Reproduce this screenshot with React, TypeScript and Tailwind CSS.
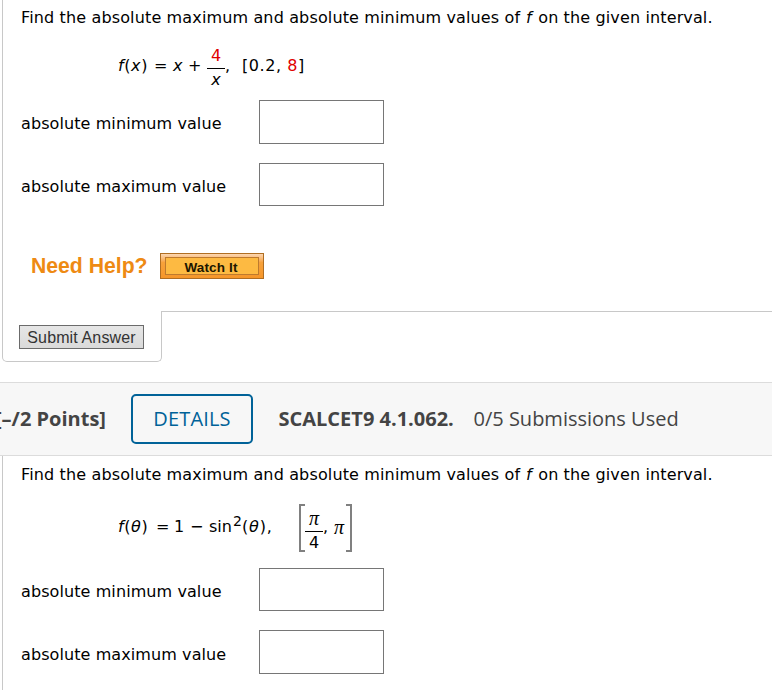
import type { ReactNode } from "react";

function Cell({ w, children, italic = false }: { w: number; children: ReactNode; italic?: boolean }) {
  return (
    <span className={italic ? "block shrink-0 italic" : "block shrink-0"} style={{ width: w }}>
      {children}
    </span>
  );
}

function Question() {
  return (
    <p className="flex h-5 whitespace-pre pl-[18px] leading-5">
      <Cell w={505}>
        <span className="tracking-[0.14px]">Find the absolute maximum and absolute minimum values of </span>
      </Cell>
      <Cell w={7} italic>f</Cell>
      <span className="tracking-[0.13px]"> on the given interval.</span>
    </p>
  );
}

function AnswerRow({ label, size, pad = "pt-1" }: { label: string; size: string; pad?: string }) {
  return (
    <label className="flex items-center pl-[18px]">
      <span className={`${pad} w-[238px] leading-5 tracking-[0.09px]`}>{label}</span>
      <input className={`${size} w-[125px] border border-[#767676] bg-white px-2 outline-none`} />
    </label>
  );
}

function Bracket({ right = false }: { right?: boolean }) {
  return (
    <span
      className={
        right
          ? "block h-12 w-1.5 border-y-2 border-r-2 border-[#808080]"
          : "block h-12 w-1.5 border-y-2 border-l-2 border-[#808080]"
      }
    />
  );
}

function Pi() {
  return <span className="font-['Liberation_Serif',serif] text-[20px] italic leading-5">π</span>;
}

export default function App() {
  return (
    <main className="h-[690px] w-[772px] overflow-hidden bg-white font-['DejaVu_Sans',sans-serif] text-[16px] text-black">
      <section className="ml-0.5 h-[311px] border-l border-[#c8c8c8] pt-2">
        <Question />
        <div className="mt-[19px] flex h-11 whitespace-pre pl-[115px] leading-5">
          <div className="flex pt-[9px]">
            <Cell w={36}><span className="tracking-[0.6px]"><i>f</i>(<i>x</i>)</span></Cell>
            <Cell w={19}>=</Cell>
            <Cell w={15} italic>x</Cell>
            <Cell w={19}>+</Cell>
          </div>
          <div className="w-[18px] text-center">
            <div className="h-[22px] border-b border-black leading-[18px] text-[#e00000]">4</div>
            <div className="pt-px italic">x</div>
          </div>
          <div className="flex pt-[9px]">
            <Cell w={17}>,</Cell>
            <span className="tracking-[0.55px]">[0.2, <span className="text-[#e00000]">8</span>]</span>
          </div>
        </div>
        <div className="mt-[9px] flex flex-col gap-[19px]">
          <AnswerRow label="absolute minimum value" size="h-11" />
          <AnswerRow label="absolute maximum value" size="h-[43px]" />
        </div>
        <div className="mt-[47px] flex h-[26px] items-center pl-7 font-['Liberation_Sans',Arial,sans-serif] font-bold">
          <span className="w-[129px] text-[21.2px] leading-6 text-[#ee8a13]">Need Help?</span>
          <button className="h-[26px] w-[104px] border border-[#b06e22] bg-linear-to-b from-[#fbd6b0] via-[#f7a23b] via-35% to-[#f69629] p-1 pt-[3px]">
            <span className="flex h-[18px] items-center justify-center border border-[#bd7a2e] bg-[#fdba42] pr-0.5 pt-[3px] text-[13.5px] leading-4 tracking-[0.15px] text-[#201600]">
              Watch It
            </span>
          </button>
        </div>
      </section>
      <div className="flex h-[71px]">
        <div className="ml-0.5 h-[51px] w-40 rounded-b-[5px] border-x border-b border-[#c8c8c8] pl-4 pt-3.5">
          <button className="h-6 w-[125px] border border-[#6b6b6b] bg-linear-to-b from-[#e6e6e6] to-[#dadada] pt-px font-['Liberation_Sans',Arial,sans-serif] text-[16px] leading-[22px] tracking-[0.13px] text-[#333]">
            Submit Answer
          </button>
        </div>
        <div className="flex-1 border-t border-[#c8c8c8]" />
      </div>
      <header className="flex h-[74px] items-center whitespace-pre border-y border-[#dcdcdc] bg-[#f7f7f7] font-['Open_Sans',sans-serif] text-[20px] text-[#444]">
        <div className="-ml-[5px] w-[136px] font-bold">[–/2 Points]</div>
        <button className="h-[50px] w-[122px] rounded-[5px] border-2 border-[#006298] bg-transparent text-[20px] tracking-[0.15px] text-[#006298]">
          DETAILS
        </button>
        <div className="ml-[25.5px] w-[195px] font-bold">SCALCET9 4.1.062.</div>
        <div>0/5 Submissions Used</div>
      </header>
      <section className="ml-0.5 h-[234px] border-l border-[#c8c8c8] pt-[9px]">
        <Question />
        <div className="mt-[19px] flex h-12 whitespace-pre pl-[115px] leading-5">
          <div className="flex pt-[13px]">
            <Cell w={38}><span className="tracking-[0.6px]"><i>f</i>(<i>θ</i>)</span></Cell>
            <Cell w={18}>=</Cell>
            <Cell w={16}>1</Cell>
            <Cell w={19}>−</Cell>
            <Cell w={24}>sin</Cell>
            <Cell w={9}><span className="relative -top-1.5 text-[14px]">2</span></Cell>
            <Cell w={57}><span className="tracking-[0.8px]">(<i>θ</i>),</span></Cell>
          </div>
          <Bracket />
          <div className="w-[18px] pt-1 text-center">
            <div className="h-6 border-b border-black"><Pi /></div>
            <div className="pt-px">4</div>
          </div>
          <div className="flex pt-[13px]">
            <Cell w={11}>,</Cell>
            <Cell w={12}><Pi /></Cell>
          </div>
          <Bracket right />
        </div>
        <div className="mt-4 flex flex-col gap-[19px]">
          <AnswerRow label="absolute minimum value" size="h-[43px]" />
          <AnswerRow label="absolute maximum value" size="h-11" pad="pt-1.5" />
        </div>
      </section>
    </main>
  );
}
